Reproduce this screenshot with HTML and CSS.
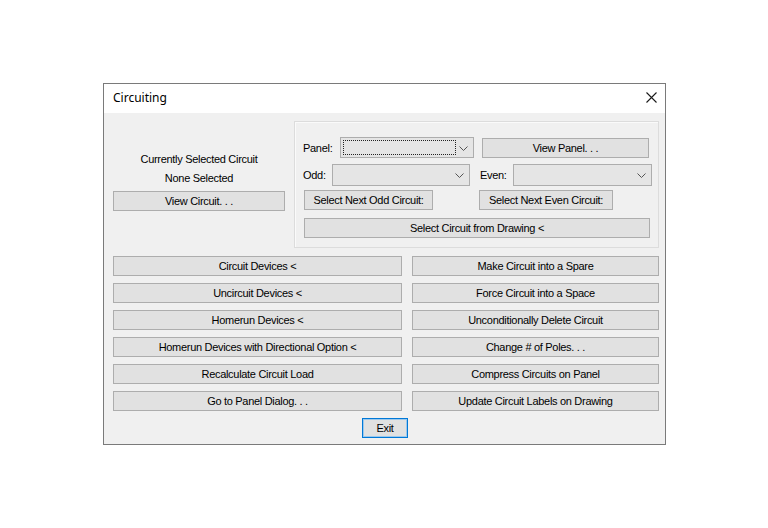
FILE: index.html
```html
<!DOCTYPE html>
<html>
<head>
<meta charset="utf-8">
<link rel="stylesheet" href="styles.css">
</head>
<body>
<div class="dialog">
  <div class="titlebar">
    <span class="title">Circuiting</span>
    <svg class="close" width="11" height="11" viewBox="0 0 11 11"><path d="M0.5 0.5 L10.5 10.5 M10.5 0.5 L0.5 10.5" stroke="#1a1a1a" stroke-width="1.1" fill="none"/></svg>
  </div>
  <div class="body">
    <div class="top">
      <div class="current">
        <div class="line">Currently Selected Circuit</div>
        <div class="line">None Selected</div>
        <button class="btn view-circuit">View Circuit. . .</button>
      </div>
      <div class="group">
        <div class="row r1">
          <span class="label panel-label">Panel:</span>
          <div class="combo panel-combo">
            <span class="focusrect"></span>
            <svg class="chev" width="9" height="5" viewBox="0 0 9 5"><path d="M0.5 0.5 L4.5 4.5 L8.5 0.5" stroke="#555" fill="none"/></svg>
          </div>
          <button class="btn view-panel">View Panel. . .</button>
        </div>
        <div class="row r2">
          <span class="label odd-label">Odd:</span>
          <div class="combo odd-combo">
            <svg class="chev" width="9" height="5" viewBox="0 0 9 5"><path d="M0.5 0.5 L4.5 4.5 L8.5 0.5" stroke="#555" fill="none"/></svg>
          </div>
          <span class="label even-label">Even:</span>
          <div class="combo even-combo">
            <svg class="chev" width="9" height="5" viewBox="0 0 9 5"><path d="M0.5 0.5 L4.5 4.5 L8.5 0.5" stroke="#555" fill="none"/></svg>
          </div>
        </div>
        <div class="row r3">
          <button class="btn next-odd">Select Next Odd Circuit:</button>
          <button class="btn next-even">Select Next Even Circuit:</button>
        </div>
        <div class="row r4">
          <button class="btn from-drawing">Select Circuit from Drawing &lt;</button>
        </div>
      </div>
    </div>
    <div class="grid">
      <button class="btn">Circuit Devices &lt;</button>
      <button class="btn">Make Circuit into a Spare</button>
      <button class="btn">Uncircuit Devices &lt;</button>
      <button class="btn">Force Circuit into a Space</button>
      <button class="btn">Homerun Devices &lt;</button>
      <button class="btn">Unconditionally Delete Circuit</button>
      <button class="btn">Homerun Devices with Directional Option &lt;</button>
      <button class="btn">Change # of Poles. . .</button>
      <button class="btn">Recalculate Circuit Load</button>
      <button class="btn">Compress Circuits on Panel</button>
      <button class="btn">Go to Panel Dialog. . .</button>
      <button class="btn">Update Circuit Labels on Drawing</button>
    </div>
    <div class="footer">
      <button class="btn exit">Exit</button>
    </div>
  </div>
</div>
</body>
</html>
```

FILE: styles.css
```css
* { box-sizing: border-box; }
html, body { margin: 0; padding: 0; background: #ffffff; }
body {
  font-family: "Liberation Sans", Arial, sans-serif;
  font-size: 11px;
  letter-spacing: -0.3px;
  color: #000;
}
.dialog {
  margin: 83px 0 0 103px;
  width: 563px;
  height: 362px;
  border: 1px solid #7a7a7a;
  background: #f0f0f0;
  display: flex;
  flex-direction: column;
}
.titlebar {
  height: 29px;
  background: #ffffff;
  display: flex;
  align-items: center;
  justify-content: space-between;
  padding: 0 8px 3px 9px;
}
.title {
  font-family: "Noto Sans", "Open Sans", sans-serif;
  font-size: 12px;
  letter-spacing: 0;
  color: #000;
}
.body {
  flex: 1;
  padding: 8px 4px 0 9px;
}
.top {
  display: flex;
  gap: 9px;
}
.current {
  width: 172px;
  flex-shrink: 0;
  padding-top: 29px;
  display: flex;
  flex-direction: column;
  align-items: center;
}
.line {
  line-height: 19px;
  height: 19px;
  text-align: center;
}
.btn {
  font-family: "Liberation Sans", Arial, sans-serif;
  font-size: 11px;
  letter-spacing: -0.3px;
  color: #000;
  background: #e1e1e1;
  border: 1px solid #adadad;
  height: 20px;
  padding: 0;
  margin: 0;
  display: flex;
  align-items: center;
  justify-content: center;
  white-space: nowrap;
  flex-shrink: 0;
}
.view-circuit { width: 172px; margin-top: 3px; }
.group {
  width: 365px;
  height: 127px;
  flex-shrink: 0;
  border: 1px solid #dcdcdc;
  box-shadow: inset 1px 1px 0 #fafafa;
  padding: 15px 0 0 8px;
  display: flex;
  flex-direction: column;
}
.row { display: flex; align-items: center; }
.label { white-space: nowrap; flex-shrink: 0; }
.combo {
  position: relative;
  flex-shrink: 0;
  height: 21px;
  background: #e5e5e5;
  border: 1px solid #adadad;
}
.chev { position: absolute; right: 5px; top: 8px; }
.focusrect {
  position: absolute;
  left: 2px; top: 2px; right: 17px; bottom: 2px;
  border: 1px dotted #222;
}
.panel-label { width: 37px; }
.panel-combo { width: 134px; }
.view-panel { width: 167px; margin-left: 8px; }
.r2 { margin-top: 6px; }
.odd-label { width: 29px; }
.odd-combo { width: 138px; height: 22px; }
.even-label { width: 33px; margin-left: 10px; }
.even-combo { width: 139px; height: 22px; }
.r3 { margin-top: 4px; padding-left: 1px; }
.next-odd { width: 129px; }
.next-even { width: 134px; margin-left: 46px; }
.r4 { margin-top: 8px; padding-left: 1px; }
.from-drawing { width: 346px; }
.grid {
  margin-top: 8px;
  display: grid;
  grid-template-columns: 289px 247px;
  column-gap: 10px;
  row-gap: 7px;
}
.footer {
  margin-top: 7px;
  padding-left: 249px;
  display: flex;
}
.exit {
  width: 46px;
  border: 1px solid #0078d7;
  box-shadow: inset 0 0 0 1px #9cc8ec;
}
```
